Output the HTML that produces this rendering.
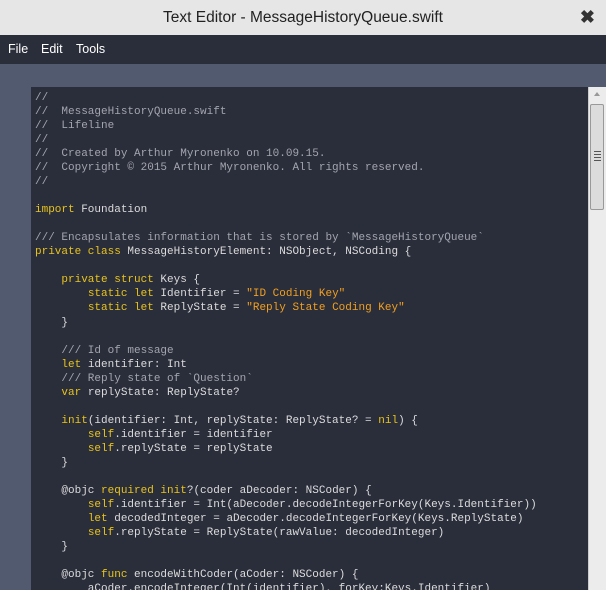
<!DOCTYPE html>
<html><head><meta charset="utf-8"><style>
*{margin:0;padding:0;box-sizing:border-box}
body{width:606px;height:590px;overflow:hidden;background:#525a70;font-family:"Liberation Sans",sans-serif;position:relative}
#title{position:absolute;left:0;top:0;width:606px;height:35px;background:#e6e6e6;text-align:center;font-size:15.5px;line-height:35px;color:#222}
#x{position:absolute;right:11px;top:0;font-size:18px;color:#333;font-weight:bold}
#menu{position:absolute;left:0;top:35px;width:606px;height:29px;background:#2a2e3a;color:#fff;font-size:12.5px;line-height:29px}
#menu span{position:absolute}
#ed{position:absolute;left:31px;top:87px;width:557px;height:503px;background:#2a2d3a;overflow:hidden}
pre{position:absolute;left:4px;top:4px;font-family:"Liberation Mono",monospace;font-size:11px;line-height:14.03px;color:#dcdcdc;white-space:pre}
.c{color:#a3a6ae}.k{color:#e8c41c}.s{color:#f0a020}
#sb{position:absolute;left:588px;top:87px;width:18px;height:503px;background:#ececec;border-left:1px solid #ccc}
#th{position:absolute;left:590px;top:104px;width:14px;height:106px;background:#dcdcdc;border:1px solid #999;border-radius:2px}
#th i{position:absolute;left:3px;width:7px;height:1px;background:#555}
</style></head><body>
<div id="title">Text Editor - MessageHistoryQueue.swift<span id="x">✖</span></div>
<div id="menu"><span style="left:8px">File</span><span style="left:41px">Edit</span><span style="left:76px">Tools</span></div>
<div id="ed"><pre><span class="c">//
//  MessageHistoryQueue.swift
//  Lifeline
//
//  Created by Arthur Myronenko on 10.09.15.
//  Copyright © 2015 Arthur Myronenko. All rights reserved.
//</span>

<span class="k">import</span> Foundation

<span class="c">/// Encapsulates information that is stored by `MessageHistoryQueue`</span>
<span class="k">private class</span> MessageHistoryElement: NSObject, NSCoding {

    <span class="k">private struct</span> Keys {
        <span class="k">static let</span> Identifier = <span class="s">"ID Coding Key"</span>
        <span class="k">static let</span> ReplyState = <span class="s">"Reply State Coding Key"</span>
    }

    <span class="c">/// Id of message</span>
    <span class="k">let</span> identifier: Int
    <span class="c">/// Reply state of `Question`</span>
    <span class="k">var</span> replyState: ReplyState?

    <span class="k">init</span>(identifier: Int, replyState: ReplyState? = <span class="k">nil</span>) {
        <span class="k">self</span>.identifier = identifier
        <span class="k">self</span>.replyState = replyState
    }

    @objc <span class="k">required init</span>?(coder aDecoder: NSCoder) {
        <span class="k">self</span>.identifier = Int(aDecoder.decodeIntegerForKey(Keys.Identifier))
        <span class="k">let</span> decodedInteger = aDecoder.decodeIntegerForKey(Keys.ReplyState)
        <span class="k">self</span>.replyState = ReplyState(rawValue: decodedInteger)
    }

    @objc <span class="k">func</span> encodeWithCoder(aCoder: NSCoder) {
        aCoder.encodeInteger(Int(identifier), forKey:Keys.Identifier)
</pre></div>
<div id="sb"><div style="position:absolute;left:5px;top:5px;width:0;height:0;border-left:3px solid transparent;border-right:3px solid transparent;border-bottom:4px solid #999"></div></div>
<div id="th"><i style="top:46px"></i><i style="top:49px"></i><i style="top:52px"></i><i style="top:55px"></i></div>
</body></html>
